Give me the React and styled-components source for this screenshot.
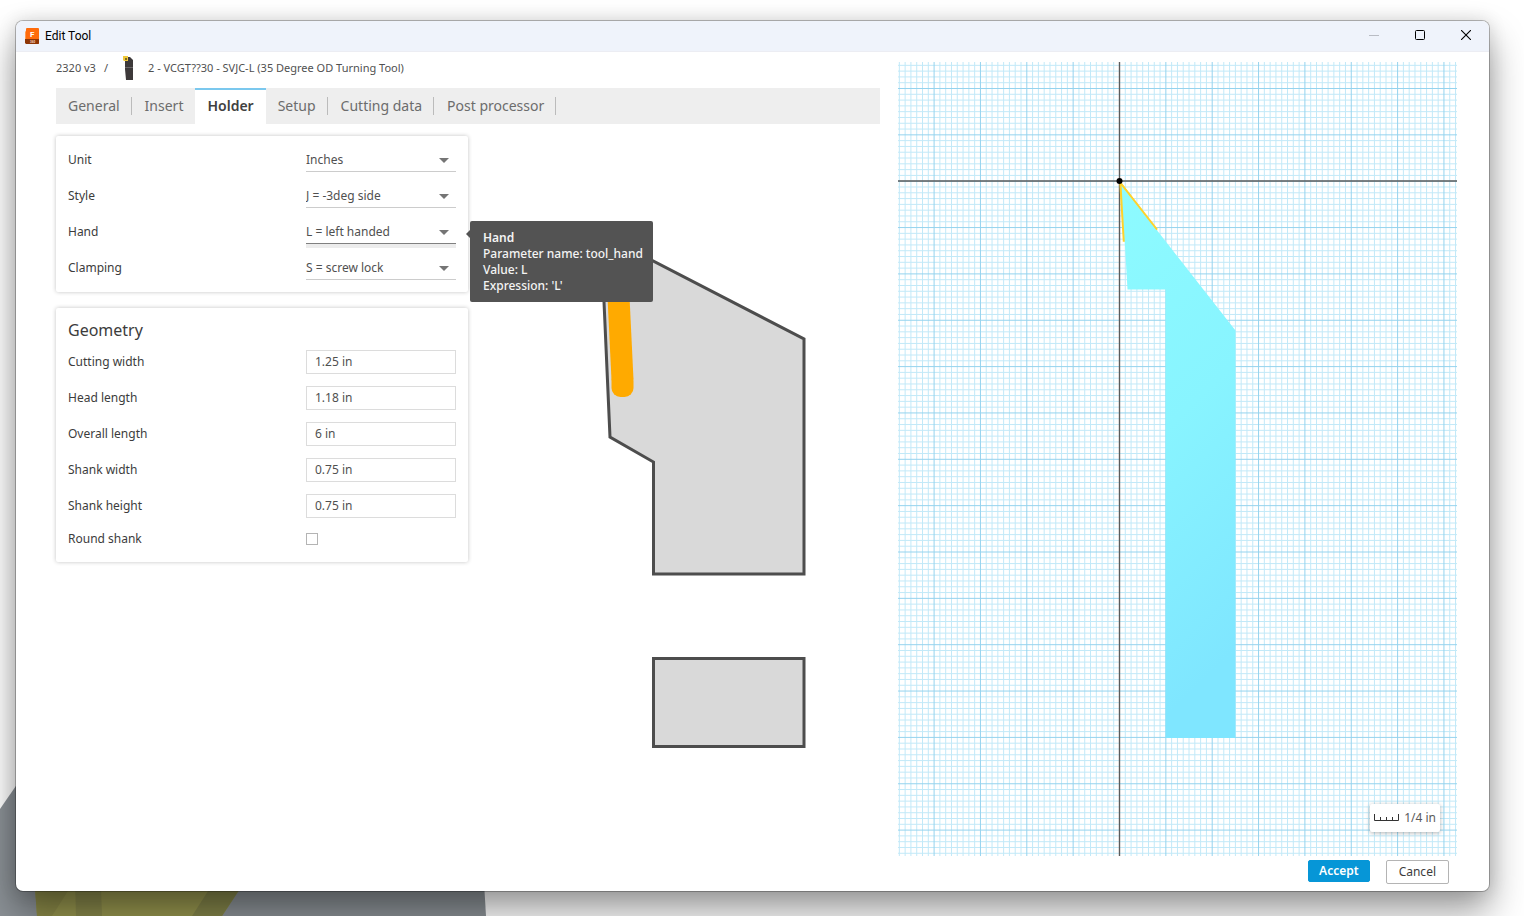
import React from "react";
import styled, { createGlobalStyle, css } from "styled-components";

const sans = '"Noto Sans", "Open Sans", sans-serif';

const GlobalStyle = createGlobalStyle`
  *, *::before, *::after { box-sizing: border-box; }
  body {
    margin: 0;
    background: #ffffff;
    color: #3c3c3c;
    font-family: ${sans};
    font-size: 12px;
    line-height: 16px;
  }
  button, input, select { font: inherit; color: inherit; }
`;

const Desktop = styled.div`
  position: relative;
  display: flex;
  min-height: 100vh;
  padding: 20px 34px 24px 15px;
  overflow: hidden;
`;

const Backdrop = styled.svg`
  position: absolute;
  left: 0;
  bottom: 0;
`;

const Dialog = styled.div`
  position: relative;
  flex: 1;
  min-width: 0;
  display: flex;
  flex-direction: column;
  border: 1px solid rgba(0, 0, 0, 0.26);
  border-radius: 8px;
  background: #ffffff;
  background-clip: padding-box;
  box-shadow: 0 20px 36px rgba(0, 0, 0, 0.38), 0 0 18px rgba(0, 0, 0, 0.12);
`;

const TitleBar = styled.header`
  display: flex;
  align-items: center;
  height: 31px;
  padding-left: 9px;
  border-bottom: 1px solid #ecedf3;
  border-radius: 7px 7px 0 0;
  background: #eff3fb;
`;

const Title = styled.h1`
  flex: 1;
  margin: 0 0 0 5px;
  color: #000000;
  font-family: Roboto, sans-serif;
  font-size: 12px;
  font-weight: 400;
`;

const WindowButton = styled.button`
  display: flex;
  align-items: center;
  justify-content: center;
  width: 46px;
  height: 28px;
  padding: 0 0 2px;
  border: 0;
  background: none;
`;

const Content = styled.div`
  flex: 1;
  display: grid;
  grid-template-columns: 824fr 559fr;
  column-gap: 18px;
  padding: 0 32px 0 40px;
`;

const Editor = styled.main`
  min-width: 0;
`;

const Breadcrumb = styled.nav`
  display: flex;
  align-items: center;
  height: 36px;
  padding-bottom: 4px;
  color: #505050;
  font-size: 11px;
  white-space: nowrap;
`;

const Crumb = styled.a`
  color: inherit;
  text-decoration: none;
`;

const Separator = styled.span`
  margin: 0 15px 0 8px;
`;

const ToolThumb = styled.svg`
  margin-right: 13px;
`;

const TabBar = styled.div`
  display: flex;
  height: 36px;
  background: #eeeeee;
`;

const Tab = styled.button`
  position: relative;
  padding: 0 12px;
  border: 0;
  background: none;
  color: #6c6c6c;
  font-size: 14px;
  white-space: nowrap;

  ${(p) =>
    p.$divider &&
    css`
      padding-right: 13px;
      &::after {
        content: "";
        position: absolute;
        top: 9px;
        right: 1px;
        width: 1px;
        height: 18px;
        background: #bbbbbb;
      }
    `}

  ${(p) =>
    p.$active &&
    css`
      border-top: 2px solid #7bc8ee;
      padding-bottom: 2px;
      background: #ffffff;
      color: #404040;
      font-weight: 600;
    `}
`;

const Workspace = styled.div`
  display: grid;
  grid-template-columns: 1fr 1fr;
  padding-top: 12px;
`;

const Forms = styled.form`
  display: flex;
  flex-direction: column;
  gap: 16px;
`;

const Panel = styled.section`
  display: flex;
  flex-direction: column;
  gap: 12px;
  padding: 12px;
  border-radius: 2px;
  background: #ffffff;
  box-shadow: 0 0 4px rgba(0, 0, 0, 0.24);
`;

const PanelTitle = styled.h2`
  margin: 0 0 -2px;
  font-size: 16px;
  font-weight: 400;
  line-height: 20px;
`;

const Row = styled.div`
  display: flex;
  align-items: center;
  justify-content: space-between;
  height: ${(p) => (p.$compact ? "20px" : "24px")};
  padding-bottom: ${(p) => (p.$compact ? "2px" : "0")};
`;

const Control = styled.div`
  position: relative;
  width: 150px;
`;

const Select = styled.select`
  display: block;
  width: 100%;
  height: 24px;
  padding: 0 24px 0 0;
  border: 0;
  border-bottom: 1px solid #cccccc;
  border-radius: 0;
  outline: none;
  appearance: none;
  background: transparent;
  color: #505050;

  ${(p) =>
    p.$hovered &&
    css`
      border-bottom-color: #808080;
      box-shadow: 0 4px 0 #ececec;
    `}
`;

const Caret = styled.svg`
  position: absolute;
  top: 10px;
  right: 7px;
  pointer-events: none;
`;

const Input = styled.input`
  display: block;
  width: 100%;
  height: 24px;
  padding: 0 8px 2px;
  border: 1px solid #dcdcdc;
  border-radius: 0;
  outline: none;
  background: #ffffff;
  color: #505050;
`;

const Checkbox = styled.input`
  display: block;
  width: 12px;
  height: 12px;
  margin: 0;
  border: 1px solid #b4b4b4;
  appearance: none;
  background: #ffffff;
`;

const Tooltip = styled.div`
  position: absolute;
  z-index: 2;
  top: 1px;
  left: calc(100% + 14px);
  padding: 9px 10px 8px 13px;
  border-radius: 2px;
  background: #535353;
  color: #f4f4f4;
  font-weight: 500;
  white-space: nowrap;

  &::before {
    content: "";
    position: absolute;
    top: 9px;
    left: -4px;
    border: solid transparent;
    border-width: 4px 4px 4px 0;
    border-right-color: #535353;
  }
`;

const TooltipTitle = styled.strong`
  display: block;
  font-weight: 600;
`;

const Diagram = styled.svg`
  display: block;
  width: 100%;
  height: auto;
`;

const Preview = styled.aside`
  display: flex;
  flex-direction: column;
  min-width: 0;
  padding-top: 10px;
`;

const Canvas = styled.div`
  position: relative;
  flex: 1;
  min-height: 620px;
  overflow: hidden;
`;

const Plot = styled.svg`
  position: absolute;
  inset: 0;
  width: 100%;
  height: 100%;
`;

const Scale = styled.div`
  position: absolute;
  right: 17px;
  bottom: 24px;
  display: flex;
  align-items: center;
  gap: 5px;
  height: 28px;
  padding: 0 4px;
  border-radius: 2px;
  background: #ffffff;
  box-shadow: 0 1px 4px rgba(0, 0, 0, 0.3);
  color: #5a5a5a;
`;

const Footer = styled.footer`
  display: flex;
  align-items: flex-start;
  justify-content: flex-end;
  gap: 16px;
  padding: 4px 8px 7px 0;
`;

const Button = styled.button`
  padding: 0 12px;
  border: 1px solid #b4b4b4;
  border-radius: 2px;
  background: #ffffff;
  height: 24px;

  ${(p) =>
    p.$primary &&
    css`
      height: 22px;
      border-color: #0696d7;
      background: #0696d7;
      color: #ffffff;
      padding: 0 10px;
      font-weight: 600;
    `}
`;

const tabs = ["General", "Insert", "Holder", "Setup", "Cutting data", "Post processor"];

const choices = [
  { id: "unit", label: "Unit", value: "Inches" },
  { id: "style", label: "Style", value: "J = -3deg side" },
  { id: "hand", label: "Hand", value: "L = left handed", hovered: true },
  { id: "clamping", label: "Clamping", value: "S = screw lock" },
];

const dimensions = [
  { id: "cutting-width", label: "Cutting width", value: "1.25 in" },
  { id: "head-length", label: "Head length", value: "1.18 in" },
  { id: "overall-length", label: "Overall length", value: "6 in" },
  { id: "shank-width", label: "Shank width", value: "0.75 in" },
  { id: "shank-height", label: "Shank height", value: "0.75 in" },
];

function Scene() {
  return (
    <Backdrop width="500" height="136" viewBox="0 780 500 136" aria-hidden="true">
      <path d="M0 809 L20 780 H478 L486 916 H0Z" fill="#8b9196" />
      <path d="M33 860 L37 916 H222 L259 860Z" fill="#96954e" />
      <path d="M33 860 L37 916 H52 L75 880Z" fill="#8b8a48" />
      <path d="M75 880 L76 916 H102 L100 860Z" fill="#87874a" />
      <path d="M228 860 L192 916 H222 L259 860Z" fill="#838449" />
    </Backdrop>
  );
}

function FusionLogo() {
  return (
    <svg width="15" height="17" viewBox="0 0 15 17" aria-hidden="true">
      <path d="M0 4 L2 1 V15 L0 14Z" fill="#ff9a50" />
      <rect x="1" y="0" width="13" height="16" rx="1" fill="#ff6b0b" />
      <path d="M0 11 H14 V15 Q14 16 13 16 H1 L0 15Z" fill="#8f3606" />
      <text x="5" y="9" fill="#ffffff" fontFamily="Roboto, sans-serif" fontSize="8" fontWeight="700">F</text>
      <text x="5" y="15" fill="#f4d8c8" fontFamily="Roboto, sans-serif" fontSize="3" fontWeight="700">360</text>
    </svg>
  );
}

function HolderDiagram() {
  return (
    <Diagram viewBox="0 0 412 620" role="img" aria-label="Holder outline">
      <g fill="#d9d9d9" stroke="#4d4d4d" strokeWidth="3">
        <path d="M133 98 L142 301 L185.500 326 V438 H336 V203Z" />
        <rect x="185.500" y="522.500" width="150.500" height="88" />
      </g>
      <path d="M149.500 140 L154.500 244" stroke="#ffaa00" strokeWidth="22" />
      <rect x="143.500" y="236" width="22" height="25" rx="9" fill="#ffaa00" />
    </Diagram>
  );
}

const ORIGIN_X = 221.5;
const ORIGIN_Y = 119.2;
const QUARTER_INCH = 46.35;
const steps = Array.from({ length: 600 }, (_, i) => i - 120);

function gridPath(axis, major) {
  return steps
    .filter((n) => (n % 8 === 0) === major)
    .map((n) => {
      const offset = (n * QUARTER_INCH) / 8;
      return axis === "x"
        ? `M${(ORIGIN_X + offset).toFixed(2)} 0V3000`
        : `M0 ${(ORIGIN_Y + offset).toFixed(2)}H3000`;
    })
    .join("");
}

function ToolPlot() {
  return (
    <Plot role="img" aria-label="Tool preview">
      <defs>
        <linearGradient id="steel" x1="0" y1="0" x2="0.2" y2="1">
          <stop offset="0" stopColor="#8dfbff" />
          <stop offset="0.5" stopColor="#88f4ff" />
          <stop offset="1" stopColor="#7fe6ff" />
        </linearGradient>
      </defs>
      <path d={gridPath("x", false) + gridPath("y", false)} stroke="#c2e9f8" />
      <path d={gridPath("x", true) + gridPath("y", true)} stroke="#95d3ee" />
      <path d="M221.500 0V3000M0 119H3000" stroke="#5c5c5c" strokeWidth="1.400" />
      <g transform="translate(221.5 119)">
        <path d="M0.500 1 L37 49 L33 56 L7 60 L4 60Z" fill="#ffd22b" stroke="#ffd22b" strokeWidth="1.500" />
        <path d="M2 4 L116 149.500 V557 H46 V108.500 H8Z" fill="url(#steel)" />
        <path d="M1 2 L37.500 48.500" stroke="#ffd22b" strokeWidth="2" />
        <circle r="3" fill="#000000" />
      </g>
    </Plot>
  );
}

export default function App() {
  return (
    <>
      <GlobalStyle />
      <Desktop>
        <Scene />
        <Dialog role="dialog" aria-label="Edit Tool">
          <TitleBar>
            <FusionLogo />
            <Title>Edit Tool</Title>
            <WindowButton aria-label="Minimize">
              <svg width="10" height="10" viewBox="0 0 10 10" stroke="#b9bcc4">
                <path d="M0 5.500H10" />
              </svg>
            </WindowButton>
            <WindowButton aria-label="Maximize">
              <svg width="10" height="10" viewBox="0 0 10 10" fill="none" stroke="#000000">
                <rect x="0.500" y="0.500" width="9" height="9" rx="1" />
              </svg>
            </WindowButton>
            <WindowButton aria-label="Close">
              <svg width="10" height="10" viewBox="0 0 10 10" stroke="#000000" strokeWidth="1.100">
                <path d="M0 0L10 10M10 0L0 10" />
              </svg>
            </WindowButton>
          </TitleBar>
          <Content>
            <Editor>
              <Breadcrumb aria-label="Breadcrumb">
                <Crumb href="#library">2320 v3</Crumb>
                <Separator>/</Separator>
                <ToolThumb width="12" height="24" viewBox="0 0 12 24" aria-hidden="true">
                  <path d="M3 1H7L10 4V24H3L2 13V4Z" fill="#3d393a" />
                  <path d="M2 11.500H10" stroke="#696567" />
                  <path d="M0 0H5V5H1L0 4Z" fill="#f0c93a" />
                  <circle cx="3" cy="3" r="1" fill="#5a4a16" />
                </ToolThumb>
                <span>2 - VCGT??30 - SVJC-L (35 Degree OD Turning Tool)</span>
              </Breadcrumb>
              <TabBar role="tablist">
                {tabs.map((name, i) => (
                  <Tab
                    key={name}
                    role="tab"
                    aria-selected={name === "Holder"}
                    $active={name === "Holder"}
                    $divider={name !== "Holder" && tabs[i + 1] !== "Holder"}
                  >
                    {name}
                  </Tab>
                ))}
              </TabBar>
              <Workspace>
                <Forms>
                  <Panel>
                    {choices.map(({ id, label, value, hovered }) => (
                      <Row key={id}>
                        <label htmlFor={id}>{label}</label>
                        <Control>
                          <Select id={id} $hovered={hovered}>
                            <option>{value}</option>
                          </Select>
                          <Caret width="10" height="5" viewBox="0 0 10 5" aria-hidden="true">
                            <path d="M0 0H10L5 5Z" fill="#757575" />
                          </Caret>
                          {hovered && (
                            <Tooltip role="tooltip">
                              <TooltipTitle>Hand</TooltipTitle>
                              <div>Parameter name: tool_hand</div>
                              <div>Value: L</div>
                              <div>Expression: 'L'</div>
                            </Tooltip>
                          )}
                        </Control>
                      </Row>
                    ))}
                  </Panel>
                  <Panel>
                    <PanelTitle>Geometry</PanelTitle>
                    {dimensions.map(({ id, label, value }) => (
                      <Row key={id}>
                        <label htmlFor={id}>{label}</label>
                        <Control>
                          <Input id={id} type="text" defaultValue={value} />
                        </Control>
                      </Row>
                    ))}
                    <Row $compact>
                      <label htmlFor="round-shank">Round shank</label>
                      <Control>
                        <Checkbox id="round-shank" type="checkbox" />
                      </Control>
                    </Row>
                  </Panel>
                </Forms>
                <HolderDiagram />
              </Workspace>
            </Editor>
            <Preview>
              <Canvas>
                <ToolPlot />
                <Scale>
                  <svg width="25" height="8" viewBox="0 0 25 8" fill="none" stroke="#333333" aria-hidden="true">
                    <path d="M0.500 0V6.500H24.500V0M6.500 3V6M12.500 3V6M18.500 3V6" />
                  </svg>
                  <span>1/4 in</span>
                </Scale>
              </Canvas>
              <Footer>
                <Button $primary>Accept</Button>
                <Button>Cancel</Button>
              </Footer>
            </Preview>
          </Content>
        </Dialog>
      </Desktop>
    </>
  );
}
